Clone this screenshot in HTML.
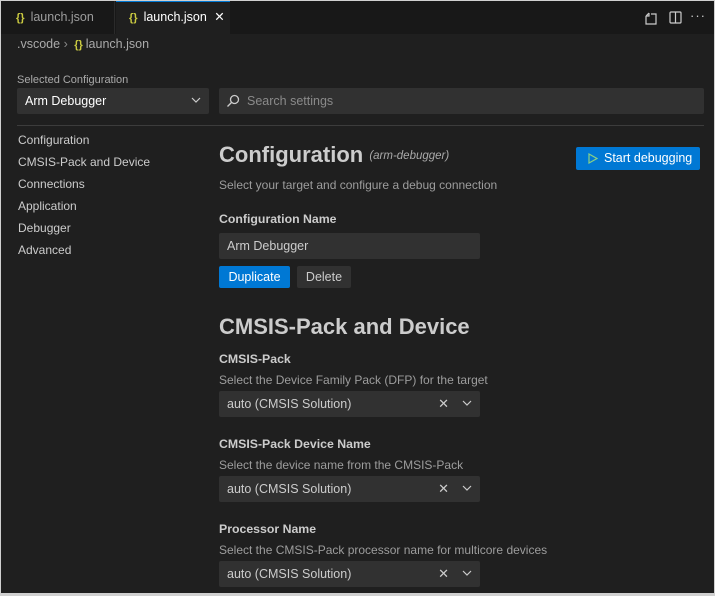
<!DOCTYPE html><html><head><style>
*{box-sizing:border-box;margin:0;padding:0}
body{width:715px;height:596px;background:#d0d0d0;font-family:"Liberation Sans",sans-serif;overflow:hidden;position:relative}
#w{position:absolute;left:1px;top:1px;width:713px;height:592px;background:#1f1f1f;overflow:hidden}
.a{position:absolute;white-space:nowrap}
.tabs{position:absolute;left:0;top:0;width:713px;height:33px;background:#181818}
.t{position:absolute;top:0;height:33px;font-size:12.5px;color:#9d9d9d;line-height:33px}
.br{color:#cbcb41;font-weight:bold;font-size:11px;margin-right:6px}
.nav{font-size:12px;color:#cccccc;left:17px}
.in{position:absolute;background:#313131;border-radius:2px;font-size:12.5px;color:#ccc;line-height:25px;padding-left:8px}
.lbl{font-size:12.3px;font-weight:bold;color:#ccc;left:218px}
.d{font-size:12px;color:#9d9d9d;left:218px}
.h{font-size:22px;font-weight:bold;color:#ccc;left:218px}
.x{position:absolute;right:31px;top:0;color:#ccc;font-size:13px}
.chev{position:absolute;right:8px;top:9px}
</style></head><body><div id="w">
<div class="tabs">
<div class="t" style="left:0;width:114px;padding-left:15px;border-right:1px solid #2b2b2b"><span class="br">{}</span>launch.json</div>
<div class="t" style="left:115px;width:114px;background:#1f1f1f;color:#fff;padding-left:13px;border-top:1px solid #0078d4;line-height:31px"><span class="br">{}</span>launch.json <span style="margin-left:4px">✕</span></div>
<svg class="a" style="left:643px;top:10px" width="14" height="14" viewBox="0 0 14 14" fill="none" stroke="#ccc" stroke-width="1.2"><path d="M2 5V13H12V3H7M2 5L5 2M2 5H5V2"/></svg>
<svg class="a" style="left:668px;top:10px" width="13" height="13" viewBox="0 0 13 13" fill="none" stroke="#ccc" stroke-width="1.2"><rect x="1" y="1" width="11" height="11" rx="1"/><path d="M6.5 1V12"/></svg>
<div class="a" style="left:689px;top:7px;color:#ccc;font-size:13px;letter-spacing:1px">···</div>
</div>
<div class="a" style="left:16px;top:36px;font-size:12.5px;color:#aaa">.vscode <span style="color:#888">›</span> <span class="br" style="margin:0 3px">{}</span>launch.json</div>
<div class="a" style="left:16px;top:73px;font-size:11px;color:#aaa">Selected Configuration</div>
<div class="in" style="left:16px;top:87px;width:192px;height:26px;color:#fff;line-height:26px">Arm Debugger<svg class="chev" width="10" height="7" viewBox="0 0 10 7" fill="none" stroke="#ccc" stroke-width="1.2"><path d="M1 1L5 5L9 1"/></svg></div>
<div class="in" style="left:218px;top:87px;width:485px;height:26px;padding-left:28px;color:#8a8a8a;line-height:26px">Search settings<svg class="a" style="left:7px;top:6px" width="14" height="14" viewBox="0 0 14 14" fill="none" stroke="#ccc" stroke-width="1.3"><circle cx="8.5" cy="5.5" r="4"/><path d="M5.5 8.5L1.5 12.5"/></svg></div>
<div class="a" style="left:16px;top:124px;width:687px;height:1px;background:#3c3c3c"></div>
<div class="a nav" style="top:132px">Configuration</div>
<div class="a nav" style="top:154px">CMSIS-Pack and Device</div>
<div class="a nav" style="top:176px">Connections</div>
<div class="a nav" style="top:198px">Application</div>
<div class="a nav" style="top:220px">Debugger</div>
<div class="a nav" style="top:242px">Advanced</div>
<div class="a h" style="top:141px">Configuration <span style="font-size:11.5px;font-style:italic;font-weight:normal;color:#aaa;vertical-align:3px">(arm-debugger)</span></div>
<div class="a" style="left:575px;top:146px;width:124px;height:23px;background:#0078d4;border-radius:2px;color:#fff;font-size:12.5px;line-height:23px;padding-left:28px">Start debugging<svg class="a" style="left:12px;top:6px" width="10" height="11" viewBox="0 0 10 11" fill="none" stroke="#89d185" stroke-width="1.2"><path d="M1 1L9 5.5L1 10Z"/></svg></div>
<div class="a d" style="top:177px">Select your target and configure a debug connection</div>
<div class="a lbl" style="top:211px">Configuration Name</div>
<div class="in" style="left:218px;top:232px;width:261px;height:26px;line-height:26px">Arm Debugger</div>
<div class="a" style="left:218px;top:265px;width:71px;height:22px;background:#0078d4;border-radius:2px;color:#fff;font-size:12.5px;line-height:22px;text-align:center">Duplicate</div>
<div class="a" style="left:296px;top:265px;width:54px;height:22px;background:#313131;border-radius:2px;color:#ccc;font-size:12.5px;line-height:22px;text-align:center">Delete</div>
<div class="a h" style="top:313px">CMSIS-Pack and Device</div>
<div class="a lbl" style="top:351px">CMSIS-Pack</div>
<div class="a d" style="top:372px">Select the Device Family Pack (DFP) for the target</div>
<div class="in" style="left:218px;top:390px;width:261px;height:26px;line-height:26px">auto (CMSIS Solution)<span class="x">✕</span><svg class="chev" width="10" height="7" viewBox="0 0 10 7" fill="none" stroke="#ccc" stroke-width="1.2"><path d="M1 1L5 5L9 1"/></svg></div>
<div class="a lbl" style="top:436px">CMSIS-Pack Device Name</div>
<div class="a d" style="top:457px">Select the device name from the CMSIS-Pack</div>
<div class="in" style="left:218px;top:475px;width:261px;height:26px;line-height:26px">auto (CMSIS Solution)<span class="x">✕</span><svg class="chev" width="10" height="7" viewBox="0 0 10 7" fill="none" stroke="#ccc" stroke-width="1.2"><path d="M1 1L5 5L9 1"/></svg></div>
<div class="a lbl" style="top:521px">Processor Name</div>
<div class="a d" style="top:542px">Select the CMSIS-Pack processor name for multicore devices</div>
<div class="in" style="left:218px;top:560px;width:261px;height:26px;line-height:26px">auto (CMSIS Solution)<span class="x">✕</span><svg class="chev" width="10" height="7" viewBox="0 0 10 7" fill="none" stroke="#ccc" stroke-width="1.2"><path d="M1 1L5 5L9 1"/></svg></div>
</div></body></html>
